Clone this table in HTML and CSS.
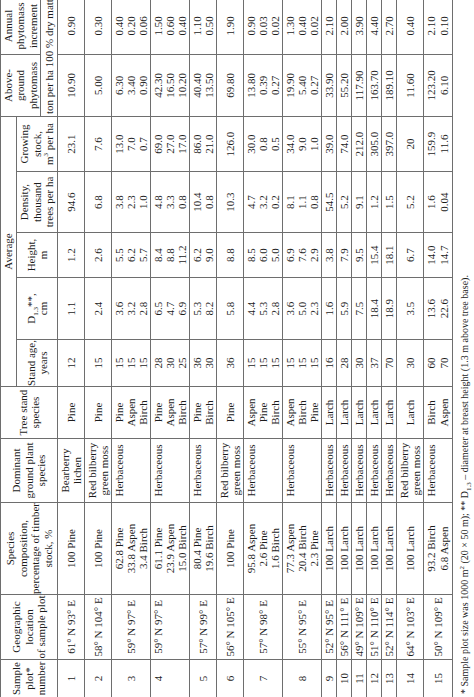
FILE: index.html
```html
<!DOCTYPE html>
<html lang="en">
<head>
<meta charset="utf-8">
<title>Sample plots</title>
<link rel="stylesheet" href="styles.css">
</head>
<body>
<div class="sheet">
  <table class="data">
    <colgroup>
      <col class="w-plot"><col class="w-geo"><col class="w-comp"><col class="w-dom"><col class="w-tree">
      <col class="w-age"><col class="w-d"><col class="w-h"><col class="w-dens"><col class="w-stock">
      <col class="w-above"><col class="w-annual">
    </colgroup>
    <thead>
      <tr class="h1">
        <th rowspan="3">Sample<br>plot*<br>number</th>
        <th rowspan="3">Geographic<br>location<br>of sample plot</th>
        <th rowspan="3">Species<br>composition,<br>percentage of timber<br>stock, %</th>
        <th rowspan="3">Dominant<br>ground plant<br>species</th>
        <th rowspan="3">Tree stand<br>species</th>
        <th colspan="5">Average</th>
        <th rowspan="2">Above-<br>ground<br>phytomass</th>
        <th rowspan="2">Annual<br>phytomass<br>increment</th>
      </tr>
      <tr class="h2">
        <th rowspan="2">Stand age,<br>years</th>
        <th rowspan="2">D<sub>1.3</sub>**,<br>cm</th>
        <th rowspan="2">Height,<br>m</th>
        <th rowspan="2">Density,<br>thousand<br>trees per ha</th>
        <th rowspan="2">Growing<br>stock,<br>m<sup>3</sup> per ha</th>
      </tr>
      <tr class="h3">
        <th colspan="2" class="unit">ton per ha 100 % dry matter</th>
      </tr>
    </thead>
    <tbody>
      <tr class="two"><td>1</td><td>61° N 93° E</td><td>100 Pine</td><td class="dom">Bearberry<br>lichen</td><td>Pine</td><td>12</td><td>1.1</td><td>1.2</td><td>94.6</td><td>23.1</td><td>10.90</td><td>0.90</td></tr>
      <tr class="two"><td>2</td><td>58° N 104° E</td><td>100 Pine</td><td class="dom">Red bilberry<br>green moss</td><td>Pine</td><td>15</td><td>2.4</td><td>2.6</td><td>6.8</td><td>7.6</td><td>5.00</td><td>0.30</td></tr>
      <tr class="three"><td>3</td><td>59° N 97° E</td><td>62.8 Pine<br>33.8 Aspen<br>3.4 Birch</td><td class="dom">Herbaceous</td><td>Pine<br>Aspen<br>Birch</td><td>15<br>15<br>15</td><td>3.6<br>3.2<br>2.8</td><td>5.5<br>6.2<br>5.7</td><td>3.8<br>2.3<br>1.0</td><td>13.0<br>7.0<br>0.7</td><td>6.30<br>3.40<br>0.90</td><td>0.40<br>0.20<br>0.06</td></tr>
      <tr class="three"><td class="top">4</td><td class="top">59° N 97° E</td><td>61.1 Pine<br>23.9 Aspen<br>15.0 Birch</td><td class="dom">Herbaceous</td><td>Pine<br>Aspen<br>Birch</td><td>28<br>30<br>25</td><td>6.5<br>4.7<br>6.9</td><td>8.4<br>8.8<br>11.2</td><td>4.8<br>3.3<br>0.8</td><td>69.0<br>27.0<br>17.0</td><td>42.30<br>16.50<br>10.20</td><td>1.50<br>0.60<br>0.40</td></tr>
      <tr class="two"><td>5</td><td>57° N 99° E</td><td>80.4 Pine<br>19.6 Birch</td><td class="dom">Herbaceous</td><td>Pine<br>Birch</td><td>36<br>30</td><td>5.3<br>8.2</td><td>6.2<br>9.0</td><td>10.4<br>0.8</td><td>86.0<br>21.0</td><td>40.40<br>13.50</td><td>1.10<br>0.50</td></tr>
      <tr class="two"><td>6</td><td>56° N 105° E</td><td>100 Pine</td><td class="dom">Red bilberry<br>green moss</td><td>Pine</td><td>36</td><td>5.8</td><td>8.8</td><td>10.3</td><td>126.0</td><td>69.80</td><td>1.90</td></tr>
      <tr class="three"><td>7</td><td>57° N 98° E</td><td>95.8 Aspen<br>2.6 Pine<br>1.6 Birch</td><td class="dom">Herbaceous</td><td>Aspen<br>Pine<br>Birch</td><td>15<br>15<br>15</td><td>4.4<br>5.3<br>2.8</td><td>8.5<br>6.0<br>5.0</td><td>4.7<br>3.2<br>0.2</td><td>30.0<br>0.8<br>0.5</td><td>13.80<br>0.39<br>0.27</td><td>0.90<br>0.03<br>0.02</td></tr>
      <tr class="three"><td>8</td><td>55° N 95° E</td><td>77.3 Aspen<br>20.4 Birch<br>2.3 Pine</td><td class="dom">Herbaceous</td><td>Aspen<br>Birch<br>Pine</td><td>15<br>15<br>15</td><td>3.6<br>5.0<br>2.3</td><td>6.9<br>7.6<br>2.9</td><td>8.1<br>1.1<br>0.8</td><td>34.0<br>9.0<br>1.0</td><td>19.90<br>5.40<br>0.27</td><td>1.30<br>0.40<br>0.02</td></tr>
      <tr class="one"><td>9</td><td>52° N 95° E</td><td>100 Larch</td><td class="dom">Herbaceous</td><td>Larch</td><td>16</td><td>1.6</td><td>3.8</td><td>54.5</td><td>39.0</td><td>33.90</td><td>2.10</td></tr>
      <tr class="one"><td>10</td><td>56° N 111° E</td><td>100 Larch</td><td class="dom">Herbaceous</td><td>Larch</td><td>28</td><td>5.9</td><td>7.9</td><td>5.2</td><td>74.0</td><td>55.20</td><td>2.00</td></tr>
      <tr class="one"><td>11</td><td>49° N 109° E</td><td>100 Larch</td><td class="dom">Herbaceous</td><td>Larch</td><td>30</td><td>7.5</td><td>9.5</td><td>9.1</td><td>212.0</td><td>117.90</td><td>3.90</td></tr>
      <tr class="one"><td>12</td><td>51° N 110° E</td><td>100 Larch</td><td class="dom">Herbaceous</td><td>Larch</td><td>37</td><td>18.4</td><td>15.4</td><td>1.2</td><td>305.0</td><td>163.70</td><td>4.40</td></tr>
      <tr class="one"><td>13</td><td>52° N 114° E</td><td>100 Larch</td><td class="dom">Herbaceous</td><td>Larch</td><td>70</td><td>18.9</td><td>18.1</td><td>1.5</td><td>397.0</td><td>189.10</td><td>2.70</td></tr>
      <tr class="two"><td>14</td><td>64° N 103° E</td><td>100 Larch</td><td class="dom">Red bilberry<br>green moss</td><td>Larch</td><td>30</td><td>3.5</td><td>6.7</td><td>5.2</td><td>20</td><td>11.60</td><td>0.40</td></tr>
      <tr class="last"><td>15</td><td>50° N 109° E</td><td>93.2 Birch<br>6.8 Aspen</td><td class="dom">Herbaceous</td><td>Birch<br>Aspen</td><td>60<br>70</td><td>13.6<br>22.6</td><td>14.0<br>14.7</td><td>1.6<br>0.04</td><td>159.9<br>11.6</td><td>123.20<br>6.10</td><td>2.10<br>0.10</td></tr>
    </tbody>
  </table>
  <p class="note">* Sample plot size was 1000 m<sup>2</sup> (20 × 50 m); ** D<sub>1.3</sub> – diameter at breast height (1.3 m above tree base).</p>
</div>
</body>
</html>
```

FILE: styles.css
```css
html, body {
  margin: 0;
  padding: 0;
  background: #ffffff;
}

body {
  width: 474px;
  height: 697px;
  overflow: hidden;
  font-family: "Liberation Serif", "Times New Roman", serif;
  color: #1c1c1c;
}

.sheet {
  width: 700px;
  height: 474px;
  transform-origin: 0 0;
  transform: translateY(698px) rotate(-90deg);
}

.data {
  width: 700px;
  border-collapse: collapse;
  table-layout: fixed;
  font-size: 11px;
  line-height: 12px;
}

.w-plot { width: 38px; }
.w-geo { width: 65px; }
.w-comp { width: 92px; }
.w-dom { width: 64px; }
.w-tree { width: 52px; }
.w-age { width: 47px; }
.w-d { width: 62px; }
.w-h { width: 45px; }
.w-dens { width: 61px; }
.w-stock { width: 55px; }
.w-above { width: 62px; }
.w-annual { width: 57px; }

.data th,
.data td {
  border: 1px solid #6e6e6e;
  text-align: center;
  overflow: visible;
  white-space: nowrap;
}

.data th {
  font-weight: normal;
  vertical-align: middle;
  padding: 0;
  line-height: 12.5px;
}

.data td {
  vertical-align: middle;
  padding: 1px 0;
}

.data td.dom,
.data td.top {
  vertical-align: top;
}

.h1 { height: 16px; }
.h2 { height: 24px; }
.h3 { height: 17px; }

.one { height: 15px; }
.two { height: 27px; }
.three { height: 39px; }
.last { height: 29px; line-height: 13px; }

.data .unit {
  text-align: left;
  padding-left: 2px;
}

.data sub,
.data sup,
.note sub,
.note sup {
  font-size: 7px;
  line-height: 0;
}

.note {
  margin: 6px 0 0 4px;
  font-size: 10px;
  line-height: 12px;
  white-space: nowrap;
}
```
